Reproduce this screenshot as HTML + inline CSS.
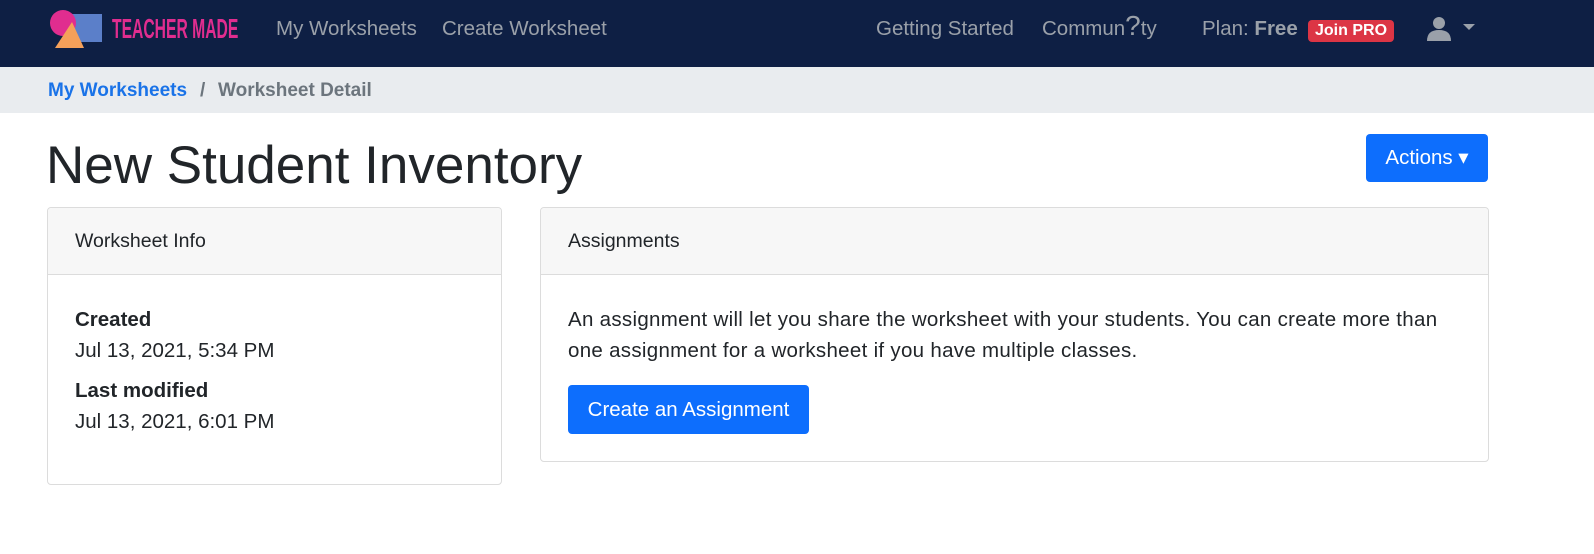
<!DOCTYPE html>
<html><head><style>
body{margin:0;width:1594px;height:554px;background:#fff;font-family:"Liberation Sans",sans-serif;position:relative;overflow:hidden;color:#212529}
.nav{position:absolute;left:0;top:0;width:1594px;height:67px;background:#0e1f44}
.t{position:absolute;white-space:nowrap}
.nl{color:#9aa0a9;font-size:20.5px;top:17px}
.crumb{position:absolute;top:67px;left:0;width:1594px;height:46px;background:#e9ecef}
.card{position:absolute;border:1px solid #dcdcdc;border-radius:4px;background:#fff}
.ch{height:66px;background:#f7f7f7;border-bottom:1px solid #dcdcdc;font-size:19.5px;line-height:66px;padding-left:27px;border-radius:4px 4px 0 0}
.btn{position:absolute;background:#0d6efd;color:#fff;border-radius:4px;font-size:20.5px;text-align:center}
.bt{font-size:20.5px;line-height:31px}
</style></head><body>
<div class="nav">
<svg style="position:absolute;left:48px;top:8px" width="60" height="42">
<rect x="16" y="6" width="38" height="28" fill="#5b7fc9"/>
<circle cx="15" cy="15" r="13" fill="#e02d8f"/>
<polygon points="7,40 24,14 36,40" fill="#f5a05a"/>
</svg>
<div class="t" style="left:112px;top:13px;color:#e02d8f;font-size:28px;font-weight:bold;transform:scaleX(0.56);transform-origin:left">TEACHER MADE</div>
<div class="t nl" style="left:276px">My Worksheets</div>
<div class="t nl" style="left:442px">Create Worksheet</div>
<div class="t nl" style="left:876px">Getting Started</div>
<div class="t nl" style="left:1042px">Commun<span style="font-size:28px;line-height:0">?</span>ty</div>
<div class="t nl" style="left:1202px">Plan: <b>Free</b></div>
<div class="t" style="left:1308px;top:20px;background:#dc3545;color:#fff;font-weight:bold;font-size:16px;padding:2px 7px;border-radius:4px">Join PRO</div>
<svg style="position:absolute;left:1425px;top:15px" width="56" height="28"><circle cx="14" cy="8" r="6" fill="#9aa0a9"/><path d="M2 26 Q2 15 14 15 Q26 15 26 26Z" fill="#9aa0a9"/><path d="M38 9 L50 9 L44 15Z" fill="#9aa0a9"/></svg>
</div>
<div class="crumb">
<div class="t" style="left:48px;top:13px;font-size:19px;font-weight:bold;color:#1a73e8">My Worksheets</div>
<div class="t" style="left:200px;top:13px;font-size:19px;font-weight:bold;color:#6c757d">/</div>
<div class="t" style="left:218px;top:13px;font-size:19px;font-weight:bold;color:#6c757d">Worksheet Detail</div>
</div>
<div class="t" style="left:46px;top:135px;font-size:53px">New Student Inventory</div>
<div class="btn" style="left:1366px;top:134px;width:122px;height:48px;line-height:48px">Actions ▾</div>
<div class="card" style="left:47px;top:207px;width:453px;height:276px">
<div class="ch">Worksheet Info</div>
<div class="t bt" style="left:27px;top:96px"><b>Created</b><br>Jul 13, 2021, 5:34 PM</div>
<div class="t bt" style="left:27px;top:167px"><b>Last modified</b><br>Jul 13, 2021, 6:01 PM</div>
</div>
<div class="card" style="left:540px;top:207px;width:947px;height:253px">
<div class="ch">Assignments</div>
<div class="t bt" style="left:27px;top:96px;letter-spacing:0.3px">An assignment will let you share the worksheet with your students. You can create more than<br>one assignment for a worksheet if you have multiple classes.</div>
<div class="btn" style="left:27px;top:177px;width:241px;height:49px;line-height:49px">Create an Assignment</div>
</div>
</body></html>
